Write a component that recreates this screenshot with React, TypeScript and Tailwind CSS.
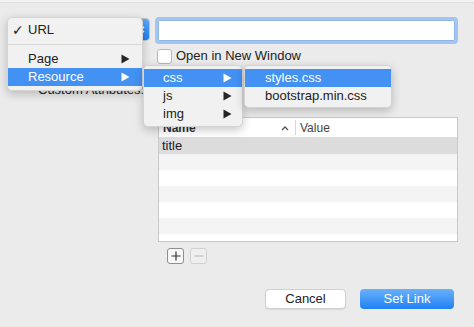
import React from "react";

const Arrow = ({ white }: { white?: boolean }) => (
  <svg width="9" height="10" viewBox="0 0 9 10" className="shrink-0">
    <path d="M0.5 0.5 L8.5 5 L0.5 9.5 Z" fill={white ? "#ffffff" : "#262626"} />
  </svg>
);

export default function App() {
  return (
    <div
      className="relative w-[474px] h-[327px] overflow-hidden bg-[#ebebeb] text-[13px] text-[#222]"
      style={{ fontFamily: '"Liberation Sans", Arial, sans-serif' }}
    >
      <div className="h-[3px] bg-[#f3f3f3] border-b border-[#dedede]" />

      {/* URL row */}
      <div className="flex mt-[14px]">
        <div className="w-[155px] flex justify-end pr-[5px]">
          <div className="w-[90px] h-[23px] mt-[1px] flex rounded-[4px] border border-[#c4c4c4] bg-white overflow-hidden">
            <div className="flex-1" />
            <div className="w-[16px] bg-gradient-to-b from-[#5ba8f8] to-[#1f7ff2] flex items-center justify-center">
              <svg width="7" height="11" viewBox="0 0 7 11">
                <path d="M1 4 L3.5 1.5 L6 4 M1 7 L3.5 9.5 L6 7" stroke="#fff" strokeWidth="1.3" fill="none" />
              </svg>
            </div>
          </div>
        </div>
        <div className="w-[303px] h-[27px] rounded-[4px] border-[3px] border-[#a3c6ef] bg-white">
          <div className="w-full h-full border border-[#8fb5e6] rounded-[1px]" />
        </div>
      </div>

      {/* checkbox */}
      <div className="flex items-center mt-[4px] ml-[157px] h-[16px]">
        <div className="w-[15px] h-[15px] rounded-[3px] border border-[#b8b8b8] bg-white" />
        <span className="ml-[4px]">Open in New Window</span>
      </div>

      {/* custom attributes label */}
      <div className="ml-[38px] mt-[19px] leading-[14px]">Custom Attributes:</div>

      {/* table */}
      <div className="ml-[158px] mt-[20px] w-[300px] h-[125px] border border-[#c9c9c9] bg-white flex flex-col overflow-hidden">
        <div className="h-[20px] flex items-center border-b border-[#dddddd] shrink-0">
          <span className="ml-[4px] w-[118px] text-[#333] font-semibold text-[12px]">Name</span>
          <svg width="8" height="6" viewBox="0 0 8 6" className="mr-[6px]">
            <path d="M1 5 L4 2 L7 5" stroke="#555" strokeWidth="1.3" fill="none" />
          </svg>
          <div className="w-px h-[15px] bg-[#d6d6d6]" />
          <span className="ml-[4px] text-[#444] text-[12px]">Value</span>
        </div>
        <div className="h-[16px] bg-[#dcdcdc] flex items-center pl-[3px] shrink-0">title</div>
        <div className="h-[16px] bg-[#f4f4f4] shrink-0" />
        <div className="h-[16px] bg-white shrink-0" />
        <div className="h-[16px] bg-[#f4f4f4] shrink-0" />
        <div className="h-[16px] bg-white shrink-0" />
        <div className="h-[16px] bg-[#f4f4f4] shrink-0" />
        <div className="h-[16px] bg-white shrink-0" />
      </div>

      {/* +/- */}
      <div className="flex ml-[167px] mt-[6px] gap-[6px]">
        <div className="w-[17px] h-[16px] rounded-[3px] border border-[#8f8f8f] bg-[#f7f7f7] flex items-center justify-center">
          <svg width="10" height="10" viewBox="0 0 10 10">
            <path d="M5 0.5 V9.5 M0.5 5 H9.5" stroke="#333" strokeWidth="1.2" />
          </svg>
        </div>
        <div className="w-[17px] h-[16px] rounded-[3px] border border-[#d0d0d0] bg-[#efefef] flex items-center justify-center">
          <svg width="10" height="10" viewBox="0 0 10 10">
            <path d="M0.5 5 H9.5" stroke="#bdbdbd" strokeWidth="1.2" />
          </svg>
        </div>
      </div>

      {/* buttons */}
      <div className="flex mt-[25px] ml-[265px] gap-[14px]">
        <div className="w-[81px] h-[20px] rounded-[4px] bg-white border border-[#cfcfcf] shadow-[0_1px_1px_rgba(0,0,0,0.08)] flex items-center justify-center text-[#222]">
          Cancel
        </div>
        <div className="w-[94px] h-[20px] rounded-[4px] bg-gradient-to-b from-[#67b1fa] to-[#1e80f3] flex items-center justify-center text-white">
          Set Link
        </div>
      </div>

      {/* main menu */}
      <div className="absolute left-[7px] top-[17px] w-[136px] h-[74px] rounded-[5px] bg-[#f1f1f1] border border-[#d4d4d4] shadow-[0_3px_10px_rgba(0,0,0,0.22)] pt-[3px]">
        <div className="h-[18px] flex items-center">
          <span className="w-[20px] pl-[4px] text-[14px] font-bold" style={{ fontFamily: '"DejaVu Sans", sans-serif' }}>✓</span>
          <span>URL</span>
        </div>
        <div className="h-[11px] flex items-center">
          <div className="w-full h-px bg-[#d9d9d9]" />
        </div>
        <div className="h-[18px] flex items-center pl-[20px] pr-[12px]">
          <span className="flex-1">Page</span>
          <Arrow />
        </div>
        <div className="h-[18px] flex items-center pl-[20px] pr-[12px] bg-[#4391f3] text-white">
          <span className="flex-1">Resource</span>
          <Arrow white />
        </div>
      </div>

      {/* submenu 1 */}
      <div className="absolute left-[143px] top-[65px] w-[100px] h-[62px] rounded-[5px] bg-[#f1f1f1] border border-[#d4d4d4] shadow-[0_3px_10px_rgba(0,0,0,0.22)] pt-[3px]">
        <div className="h-[18px] flex items-center pl-[19px] pr-[10px] bg-[#4391f3] text-white">
          <span className="flex-1">css</span>
          <Arrow white />
        </div>
        <div className="h-[18px] flex items-center pl-[19px] pr-[10px]">
          <span className="flex-1">js</span>
          <Arrow />
        </div>
        <div className="h-[18px] flex items-center pl-[19px] pr-[10px]">
          <span className="flex-1">img</span>
          <Arrow />
        </div>
      </div>

      {/* submenu 2 */}
      <div className="absolute left-[244px] top-[65px] w-[148px] h-[43px] rounded-[5px] bg-[#f1f1f1] border border-[#d4d4d4] shadow-[0_3px_10px_rgba(0,0,0,0.22)] pt-[3px]">
        <div className="h-[18px] flex items-center pl-[20px] bg-[#4391f3] text-white">styles.css</div>
        <div className="h-[18px] flex items-center pl-[20px]">bootstrap.min.css</div>
      </div>
    </div>
  );
}
